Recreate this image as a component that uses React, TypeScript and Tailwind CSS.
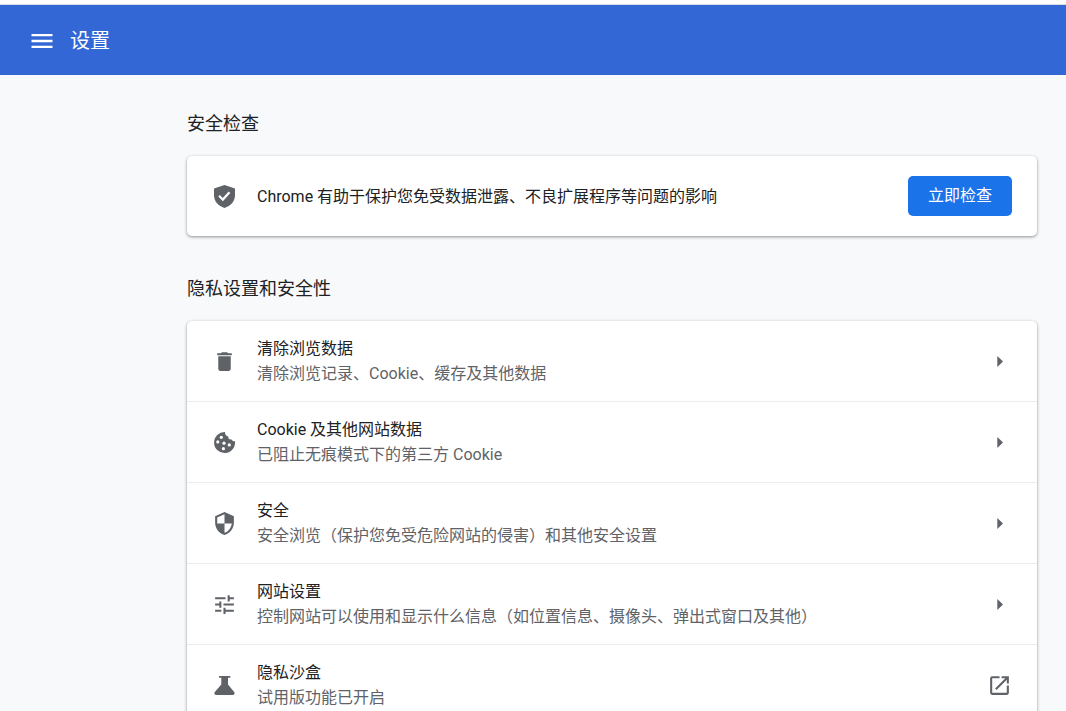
import type { ReactNode } from 'react';
import { MdDelete, MdSecurity, MdTune, MdOpenInNew, MdMenu } from 'react-icons/md';

type Row = { icon: ReactNode; title: string; detail: string; external?: boolean };

function ShieldCheckIcon() {
  return (
    <svg viewBox="0 0 25 25" className="size-[25px] shrink-0" fill="currentColor" aria-hidden="true">
      <path
        fillRule="evenodd"
        d="M12.5 1 2 4.6v6.9C2 17.2 6.4 22 12.5 24 18.6 22 23 17.2 23 11.5V4.6L12.5 1ZM10.900 17.200 6.300 12.600 7.800 11.100 10.700 13.900 16.700 7.400 18.300 8.900 10.900 17.200Z"
      />
    </svg>
  );
}

function CookieIcon() {
  return (
    <svg viewBox="0 0 25 25" className="size-[25px] shrink-0" aria-hidden="true">
      <path
        fill="currentColor"
        d="M13 2a10.500 10.500 0 1 0 10 9.200c-1.600.2-2.800-.3-3.400-1.700-2.200.4-3.600-.8-3.300-2.900C14.200 6.200 12.900 4.600 13 2Z"
      />
      <g fill="#fff">
        <circle cx="9.300" cy="7.300" r="1.600" />
        <circle cx="5.800" cy="11.900" r="1.600" />
        <circle cx="12" cy="13.200" r="1.600" />
        <circle cx="17.300" cy="14.900" r="1.600" />
        <circle cx="11.400" cy="18.700" r="1.600" />
      </g>
    </svg>
  );
}

function FlaskIcon() {
  return (
    <svg viewBox="0 0 25 25" className="size-[25px] shrink-0" fill="currentColor" aria-hidden="true">
      <path d="M7 3h11.300v1.800H16v6.700l6.200 7.500c1 1.300.2 3-1.400 3H4.200c-1.600 0-2.400-1.700-1.400-3l6.500-7.500V4.800H7V3Z" />
    </svg>
  );
}

function ArrowIcon() {
  return (
    <svg viewBox="0 0 25 25" className="size-[25px] shrink-0" fill="currentColor" aria-hidden="true">
      <path d="M10.300 7v11l5.700-5.500L10.300 7Z" />
    </svg>
  );
}

const rows: Row[] = [
  { icon: <MdDelete className="size-[25px]" />, title: '清除浏览数据', detail: '清除浏览记录、Cookie、缓存及其他数据' },
  { icon: <CookieIcon />, title: 'Cookie 及其他网站数据', detail: '已阻止无痕模式下的第三方 Cookie' },
  { icon: <MdSecurity className="size-[25px]" />, title: '安全', detail: '安全浏览（保护您免受危险网站的侵害）和其他安全设置' },
  {
    icon: <MdTune className="size-[25px]" />,
    title: '网站设置',
    detail: '控制网站可以使用和显示什么信息（如位置信息、摄像头、弹出式窗口及其他）',
  },
  { icon: <FlaskIcon />, title: '隐私沙盒', detail: '试用版功能已开启', external: true },
];

const card = 'rounded-[5px] bg-white shadow-[0_1px_3px_rgba(60,64,67,0.3),0_1px_3px_rgba(60,64,67,0.3)]';

export default function App() {
  return (
    <div className="h-screen overflow-hidden bg-[#f8f9fa] font-['Roboto','Noto_Sans_CJK_SC',sans-serif] text-base text-[#202124]">
      <header className="flex h-[75px] items-center gap-3.5 border-t-4 border-white bg-[#3367d6] pt-[3px] pl-7 text-white shadow-[inset_0_1px_0_#dadce0]">
        <button type="button" aria-label="主菜单">
          <MdMenu className="size-7" />
        </button>
        <h1 className="text-xl">设置</h1>
      </header>

      <main className="pr-[29px] pl-[187px]">
        <section className="pt-[35px]">
          <h2 className="pb-[19px] text-lg leading-[27px]">安全检查</h2>
          <div className={`flex h-20 items-center gap-5 px-[25px] ${card}`}>
            <span className="text-[#5f6368]">
              <ShieldCheckIcon />
            </span>
            <p className="flex-1 leading-[25px]">Chrome 有助于保护您免受数据泄露、不良扩展程序等问题的影响</p>
            <button type="button" className="h-10 rounded-[5px] bg-[#1a73e8] px-5 text-white">
              立即检查
            </button>
          </div>
        </section>

        <section className="pt-[39px]">
          <h2 className="pb-[19px] text-lg leading-[27px]">隐私设置和安全性</h2>
          <ul className={card}>
            {rows.map((row) => (
              <li key={row.title} className="border-b border-[#ececed] last:border-b-0">
                <a href="#" className="flex min-h-20 items-center gap-5 px-[25px] text-[#5f6368]">
                  {row.icon}
                  <span className="flex-1 leading-[25px]">
                    <span className="block text-[#202124]">{row.title}</span>
                    <span className="block">{row.detail}</span>
                  </span>
                  {row.external ? <MdOpenInNew className="size-[25px]" /> : <ArrowIcon />}
                </a>
              </li>
            ))}
          </ul>
        </section>
      </main>
    </div>
  );
}
